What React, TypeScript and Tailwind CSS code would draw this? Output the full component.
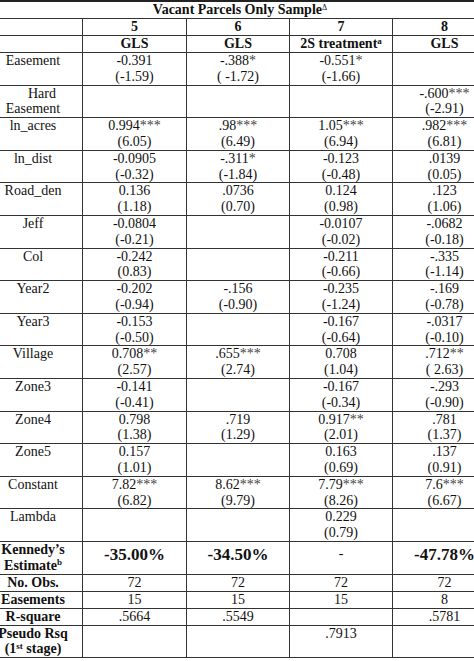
import React from "react";

type Cell = [string, string] | null;

const rows: { label: React.ReactNode; cells: Cell[] }[] = [
  { label: "Easement", cells: [["-0.391", "(-1.59)"], ["-.388*", "(\u00a0-1.72)"], ["-0.551*", "(-1.66)"], null] },
  {
    label: (
      <>
        <div className="pl-[18px]">Hard</div>
        <div>Easement</div>
      </>
    ),
    cells: [null, null, null, ["-.600***", "(-2.91)"]],
  },
  { label: "ln_acres", cells: [["0.994***", "(6.05)"], [".98***", "(6.49)"], ["1.05***", "(6.94)"], [".982***", "(6.81)"]] },
  { label: "ln_dist", cells: [["-0.0905", "(-0.32)"], ["-.311*", "(-1.84)"], ["-0.123", "(-0.48)"], [".0139", "(0.05)"]] },
  { label: "Road_den", cells: [["0.136", "(1.18)"], [".0736", "(0.70)"], ["0.124", "(0.98)"], [".123", "(1.06)"]] },
  { label: "Jeff", cells: [["-0.0804", "(-0.21)"], null, ["-0.0107", "(-0.02)"], ["-.0682", "(-0.18)"]] },
  { label: "Col", cells: [["-0.242", "(0.83)"], null, ["-0.211", "(-0.66)"], ["-.335", "(-1.14)"]] },
  { label: "Year2", cells: [["-0.202", "(-0.94)"], ["-.156", "(-0.90)"], ["-0.235", "(-1.24)"], ["-.169", "(-0.78)"]] },
  { label: "Year3", cells: [["-0.153", "(-0.50)"], null, ["-0.167", "(-0.64)"], ["-.0317", "(-0.10)"]] },
  { label: "Village", cells: [["0.708**", "(2.57)"], [".655***", "(2.74)"], ["0.708", "(1.04)"], [".712**", "(\u00a02.63)"]] },
  { label: "Zone3", cells: [["-0.141", "(-0.41)"], null, ["-0.167", "(-0.34)"], ["-.293", "(-0.90)"]] },
  { label: "Zone4", cells: [["0.798", "(1.38)"], [".719", "(1.29)"], ["0.917**", "(2.01)"], [".781", "(1.37)"]] },
  { label: "Zone5", cells: [["0.157", "(1.01)"], null, ["0.163", "(0.69)"], [".137", "(0.91)"]] },
  { label: "Constant", cells: [["7.82***", "(6.82)"], ["8.62***", "(9.79)"], ["7.79***", "(8.26)"], ["7.6***", "(6.67)"]] },
  { label: "Lambda", cells: [null, null, ["0.229", "(0.79)"], null] },
];

function Val({ v }: { v: string }) {
  const m = v.match(/^(.*?)(\*+)$/);
  if (m)
    return (
      <>
        {m[1]}
        <span className="text-[#444]">{m[2]}</span>
      </>
    );
  return <>{v}</>;
}

const B = "border-b border-[#333]";
const L = "border-l border-[#333]";

export default function App() {
  return (
    <div className="w-[474px] h-[661px] overflow-hidden bg-white text-[#111] text-[14px] font-['Liberation_Serif',serif]">
      <div className="ml-[-16px] w-[512px] grid grid-cols-[98px_104px_103px_103px_104px] border-t-2 border-[#222]">
        <div className={`col-span-5 ${B} text-center font-bold leading-[16px]`}>
          Vacant Parcels Only Sample<sup className="text-[8px] font-normal">Δ</sup>
        </div>

        <div className={`${B} leading-[16px]`}></div>
        {["5", "6", "7", "8"].map((n) => (
          <div key={n} className={`${B} ${L} text-center font-bold leading-[16px]`}>
            {n}
          </div>
        ))}

        <div className={`${B} leading-[16px]`}></div>
        <div className={`${B} ${L} text-center font-bold leading-[16px]`}>GLS</div>
        <div className={`${B} ${L} text-center font-bold leading-[16px]`}>GLS</div>
        <div className={`${B} ${L} text-center font-bold leading-[16px]`}>
          2S treatment<sup className="text-[9px]">a</sup>
        </div>
        <div className={`${B} ${L} text-center font-bold leading-[16px]`}>GLS</div>

        {rows.map((r, i) => (
          <React.Fragment key={i}>
            <div className={`${B} text-center leading-[15.8px] min-h-[32.6px]`}>{r.label}</div>
            {r.cells.map((c, j) => (
              <div key={j} className={`${B} ${L} text-center leading-[15.8px]`}>
                {c && (
                  <>
                    <div>
                      <Val v={c[0]} />
                    </div>
                    <div>{c[1]}</div>
                  </>
                )}
              </div>
            ))}
          </React.Fragment>
        ))}

        <div className={`${B} text-center font-bold leading-[15.8px]`}>
          <div>Kennedy’s</div>
          <div>
            Estimate<sup className="text-[9px]">b</sup>
          </div>
        </div>
        {["-35.00%", "-34.50%", "-", "-47.78%"].map((v, j) => (
          <div
            key={j}
            className={`${B} ${L} text-center pt-[4px] ${v === "-" ? "leading-[16px]" : "font-bold text-[17px] leading-[17px]"}`}
          >
            {v}
          </div>
        ))}

        <div className={`${B} text-center font-bold leading-[16px]`}>No. Obs.</div>
        {["72", "72", "72", "72"].map((v, j) => (
          <div key={j} className={`${B} ${L} text-center leading-[16px]`}>
            {v}
          </div>
        ))}

        <div className={`${B} text-center font-bold leading-[16px]`}>Easements</div>
        {["15", "15", "15", "8"].map((v, j) => (
          <div key={j} className={`${B} ${L} text-center leading-[16px]`}>
            {v}
          </div>
        ))}

        <div className={`${B} text-center font-bold leading-[16px]`}>R-square</div>
        {[".5664", ".5549", "", ".5781"].map((v, j) => (
          <div key={j} className={`${B} ${L} text-center leading-[16px]`}>
            {v}
          </div>
        ))}

        <div className={`${B} text-center font-bold leading-[15.8px]`}>
          <div>Pseudo Rsq</div>
          <div>
            (1<sup className="text-[9px]">st</sup> stage)
          </div>
        </div>
        {["", "", ".7913", ""].map((v, j) => (
          <div key={j} className={`${B} ${L} text-center leading-[16px]`}>
            {v}
          </div>
        ))}
      </div>
    </div>
  );
}
